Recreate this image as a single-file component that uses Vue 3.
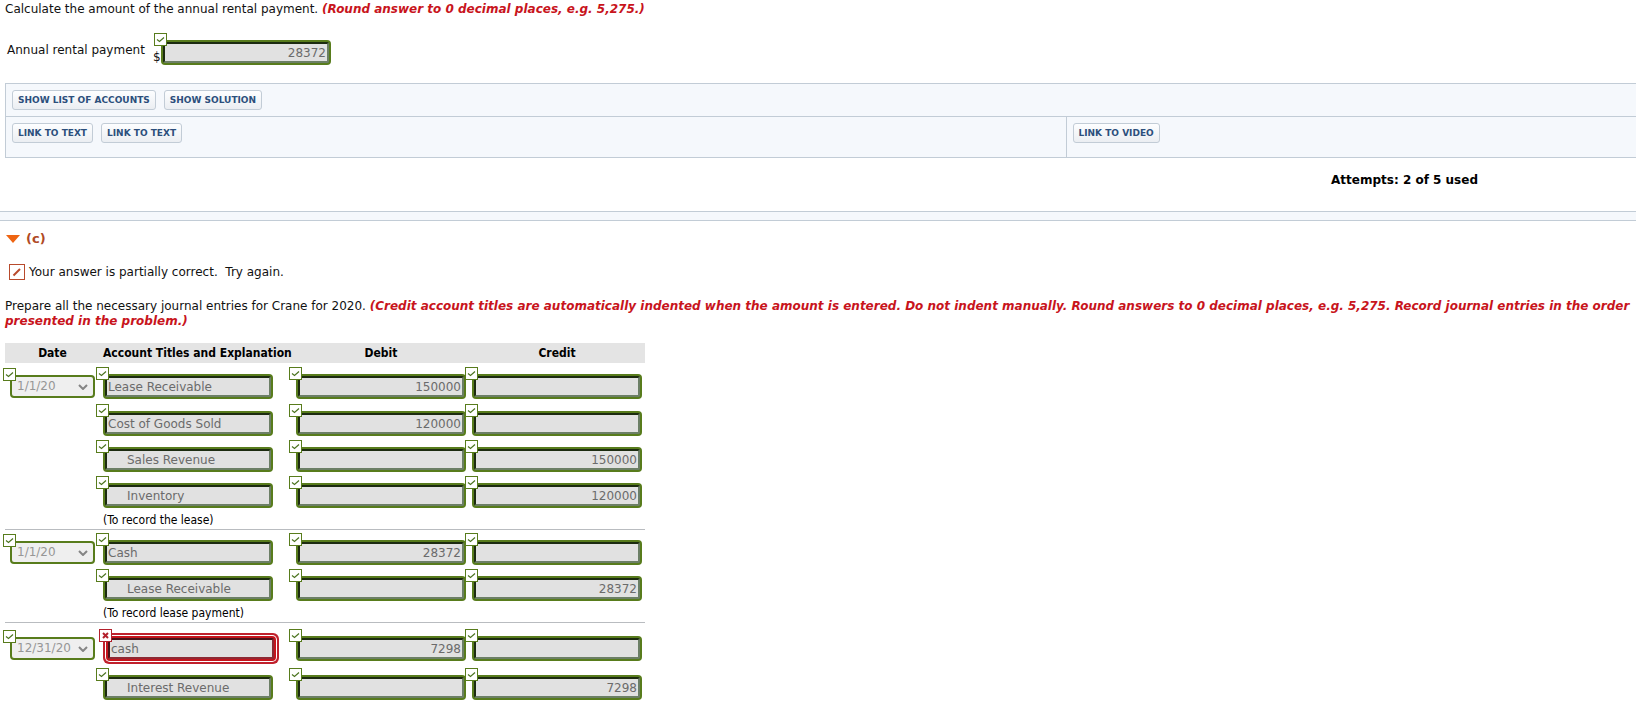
<script setup>
import { ref } from 'vue'

const payment = ref('28372')

const groups = [
  {
    date: '1/1/20',
    note: '(To record the lease)',
    lines: [
      { account: 'Lease Receivable', debit: '150000', credit: '' },
      { account: 'Cost of Goods Sold', debit: '120000', credit: '' },
      { account: 'Sales Revenue', debit: '', credit: '150000', indent: true },
      { account: 'Inventory', debit: '', credit: '120000', indent: true },
    ],
  },
  {
    date: '1/1/20',
    note: '(To record lease payment)',
    lines: [
      { account: 'Cash', debit: '28372', credit: '' },
      { account: 'Lease Receivable', debit: '', credit: '28372', indent: true },
    ],
  },
  {
    date: '12/31/20',
    note: '',
    lines: [
      { account: 'cash', debit: '7298', credit: '', wrong: true },
      { account: 'Interest Revenue', debit: '', credit: '7298', indent: true },
    ],
  },
]
</script>

<template>
  <main class="page">
    <p class="prompt">
      Calculate the amount of the annual rental payment.
      <em>(Round answer to 0 decimal places, e.g. 5,275.)</em>
    </p>

    <div class="payment">
      <label for="payment">Annual rental payment</label>
      <span class="currency">$</span>
      <span class="field">
        <input id="payment" class="amount" type="text" :value="payment" disabled />
        <svg class="badge" viewBox="0 0 11 11"><path d="M2 5.5 L4.5 7.5 L9 3.5" /></svg>
      </span>
    </div>

    <section class="tools">
      <div class="tool-row">
        <button type="button" class="tool">SHOW LIST OF ACCOUNTS</button>
        <button type="button" class="tool">SHOW SOLUTION</button>
      </div>
      <div class="link-row">
        <div class="links">
          <a href="#text-1" class="tool">LINK TO TEXT</a>
          <a href="#text-2" class="tool">LINK TO TEXT</a>
        </div>
        <div class="videos">
          <a href="#video" class="tool">LINK TO VIDEO</a>
        </div>
      </div>
    </section>

    <p class="attempts">Attempts: 2 of 5 used</p>

    <div class="divider"></div>

    <button type="button" class="part">
      <svg viewBox="0 0 14 8"><path d="M0 0 H14 L7 8 Z" /></svg>
      <span>(c)</span>
    </button>

    <p class="status">
      <svg viewBox="0 0 16 16">
        <rect x="0.5" y="0.5" width="15" height="15" />
        <path d="M4.5 11.5 L11 5" />
      </svg>
      <span>Your answer is partially correct.&nbsp; Try again.</span>
    </p>

    <p class="prompt">
      Prepare all the necessary journal entries for Crane for 2020.
      <em>(Credit account titles are automatically indented when the amount is entered. Do not indent manually. Round answers to 0 decimal places, e.g. 5,275. Record journal entries in the order presented in the problem.)</em>
    </p>

    <table class="journal">
      <colgroup>
        <col class="col-date" />
        <col class="col-account" />
        <col class="col-debit" />
        <col class="col-credit" />
      </colgroup>
      <thead>
        <tr>
          <th scope="col" class="date-head">Date</th>
          <th scope="col" class="account-head">Account Titles and Explanation</th>
          <th scope="col" class="debit-head">Debit</th>
          <th scope="col" class="credit-head">Credit</th>
        </tr>
      </thead>
      <tbody v-for="(group, g) in groups" :key="g" :class="{ opening: g === 0 }">
        <tr v-for="(line, i) in group.lines" :key="i">
          <td class="date-cell">
            <span v-if="i === 0" class="field">
              <select :aria-label="`Date of entry ${g + 1}`" disabled>
                <option>{{ group.date }}</option>
              </select>
              <svg class="arrow" viewBox="0 0 10 6"><path d="M1 1 L5 5 L9 1" /></svg>
              <svg class="badge" viewBox="0 0 11 11"><path d="M2 5.5 L4.5 7.5 L9 3.5" /></svg>
            </span>
          </td>
          <td>
            <span class="field" :class="{ wrong: line.wrong }">
              <input
                type="text"
                :class="{ indent: line.indent }"
                :value="line.account"
                :aria-label="`Entry ${g + 1}, line ${i + 1} account`"
                disabled
              />
              <svg class="badge" viewBox="0 0 11 11">
                <path v-if="line.wrong" d="M3 3 L8 8 M8 3 L3 8" />
                <path v-else d="M2 5.5 L4.5 7.5 L9 3.5" />
              </svg>
            </span>
          </td>
          <td>
            <span class="field">
              <input type="text" class="amount" :value="line.debit" :aria-label="`Entry ${g + 1}, line ${i + 1} debit`" disabled />
              <svg class="badge" viewBox="0 0 11 11"><path d="M2 5.5 L4.5 7.5 L9 3.5" /></svg>
            </span>
          </td>
          <td>
            <span class="field">
              <input type="text" class="amount" :value="line.credit" :aria-label="`Entry ${g + 1}, line ${i + 1} credit`" disabled />
              <svg class="badge" viewBox="0 0 11 11"><path d="M2 5.5 L4.5 7.5 L9 3.5" /></svg>
            </span>
          </td>
        </tr>
        <tr v-if="group.note" class="note">
          <td></td>
          <td colspan="3">{{ group.note }}</td>
        </tr>
      </tbody>
    </table>
  </main>
</template>

<style>
body {
  background: #fff;
}
</style>

<style scoped>
.page {
  font-family: Verdana, "DejaVu Sans", sans-serif;
  font-size: 12px;
  line-height: 15px;
  color: #111;
  overflow: hidden;
}

p {
  margin: 0;
}

.prompt {
  padding: 2px 5px 0;
}

.prompt em {
  font-weight: bold;
  font-style: italic;
  color: #c8141c;
}

.payment {
  display: flex;
  align-items: flex-end;
  margin: 23px 0 18px 7px;
}

.payment label {
  margin-bottom: 7px;
  width: 146px;
}

.currency {
  width: 8px;
}

.field {
  position: relative;
  display: block;
  width: max-content;
  padding: 2px;
}

.field input {
  display: block;
  box-sizing: border-box;
  width: 166px;
  height: 21px;
  margin: 0;
  padding: 0 1px;
  border: 2px solid;
  border-color: #1c2b10 #6c7f66 #6c7f66 #1c2b10;
  border-radius: 2px;
  box-shadow: 0 0 0 2px #587c1c;
  background: #e1e1e1;
  color: #6b6b6b;
  font: inherit;
}

.field input.amount {
  text-align: right;
}

.field input.indent {
  padding-left: 20px;
}

.field.wrong {
  padding: 5px;
}

.field.wrong input {
  border-color: #4a1218 #8d2a34 #8d2a34 #4a1218;
  box-shadow: 0 0 0 2px #c4141c, 0 0 0 3px #fff, 0 0 0 5px #c0202c;
}

.badge {
  position: absolute;
  left: -7px;
  top: -7px;
  z-index: 1;
  box-sizing: border-box;
  width: 13px;
  height: 13px;
  border: 1px solid #587c1c;
  background: #fff;
  fill: none;
  stroke: #4c7420;
  stroke-width: 1.2;
}

.wrong .badge {
  left: -4px;
  top: -4px;
  border-color: #b3202c;
  stroke: #b3202c;
  stroke-width: 2;
}

.field select {
  display: block;
  appearance: none;
  box-sizing: border-box;
  width: 85px;
  height: 23px;
  margin: 0;
  padding: 0 5px;
  border: 2px solid #587c1c;
  border-radius: 4px;
  background: #efefef;
  color: #969696;
  font: inherit;
  opacity: 1;
}

.arrow {
  position: absolute;
  right: 7px;
  top: 9px;
  width: 10px;
  height: 6px;
  fill: none;
  stroke: #858585;
  stroke-width: 2;
}

.tools {
  margin-left: 5px;
  border: 1px solid #c2ccd6;
  border-right: 0;
  background: #f5f8fc;
}

.tool-row,
.links,
.videos {
  display: flex;
  align-items: flex-start;
  gap: 8px;
  padding: 6px;
}

.link-row {
  display: flex;
  border-top: 1px solid #c2ccd6;
}

.links {
  box-sizing: border-box;
  width: 65%;
  min-height: 40px;
}

.videos {
  flex: 1;
  border-left: 1px solid #c2ccd6;
}

.tool {
  box-sizing: border-box;
  height: 20px;
  margin: 0;
  padding: 0 5px;
  border: 1px solid #c2ccd6;
  border-radius: 3px;
  background: linear-gradient(#fdfeff, #ebeef2);
  color: #2c4f7c;
  font-family: inherit;
  font-size: 9px;
  font-weight: bold;
  line-height: 18px;
  text-decoration: none;
  white-space: nowrap;
}

.attempts {
  margin: 15px 158px 23px 0;
  text-align: right;
  font-weight: bold;
  color: #000;
}

.divider {
  height: 8px;
  border: solid #c2ccd6;
  border-width: 1px 0;
  background: #f5f8fc;
}

.part {
  display: flex;
  align-items: center;
  gap: 6px;
  margin: 10px 0 0 6px;
  padding: 0;
  border: 0;
  background: none;
  color: #b04a25;
  font: inherit;
  font-size: 13px;
  font-weight: bold;
}

.part svg {
  width: 14px;
  height: 8px;
  fill: #ee6412;
}

.status {
  display: flex;
  align-items: center;
  gap: 4px;
  margin: 18px 0 17px 9px;
}

.status svg {
  width: 16px;
  height: 16px;
  fill: none;
  stroke: #b84a2c;
}

.status path {
  stroke-width: 2;
}

.journal {
  table-layout: fixed;
  width: 640px;
  margin: 14px 0 0 5px;
  border-collapse: separate;
  border-spacing: 0;
}

.col-date {
  width: 98px;
}

.col-account {
  width: 193px;
}

.col-debit {
  width: 176px;
}

.col-credit {
  width: 173px;
}

.journal th {
  height: 20px;
  padding: 0;
  background: #e4e4e4;
  color: #000;
  font-family: Tahoma, "DejaVu Sans Condensed", "DejaVu Sans", sans-serif;
  text-align: center;
  white-space: nowrap;
}

.journal .account-head {
  text-align: left;
}

.journal .debit-head {
  padding-right: 6px;
}

.journal .date-head,
.journal .credit-head {
  padding-right: 3px;
}

.journal td {
  padding: 7px 0 4px;
  vertical-align: middle;
}

.journal tbody tr:first-child td {
  padding: 10px 0 4px;
}

.journal .opening tr:first-child td {
  padding: 11px 0 5px;
}

.journal .date-cell .field {
  margin: 0 0 0 5px;
  padding: 0;
}

.journal .note td {
  height: 17px;
  padding: 0;
  border-bottom: 1px solid #b9bcc0;
  font-family: Tahoma, "DejaVu Sans Condensed", "DejaVu Sans", sans-serif;
  color: #000;
}
</style>
